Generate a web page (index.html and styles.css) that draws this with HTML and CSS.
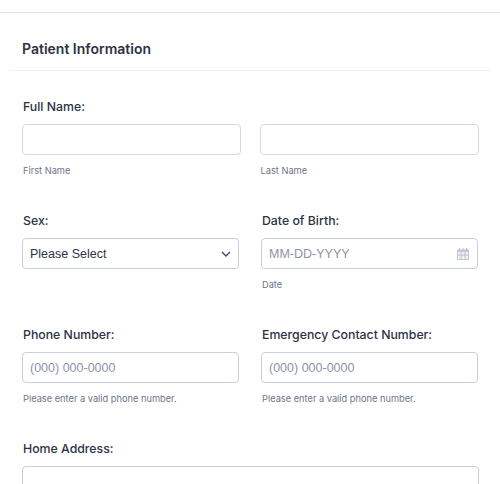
FILE: index.html
```html
<!DOCTYPE html>
<html lang="en">
<head>
    <meta charset="UTF-8">
    <title>Patient Information</title>
    <link rel="stylesheet" href="styles.css">
</head>
<body>
    <div class="form">
        <div class="form-header">
            <h2>Patient Information</h2>
        </div>

        <div class="field field-name">
            <label class="field-label">Full Name:</label>
            <div class="row row-wide">
                <div>
                    <input type="text" class="input">
                    <span class="hint">First Name</span>
                </div>
                <div>
                    <input type="text" class="input">
                    <span class="hint">Last Name</span>
                </div>
            </div>
        </div>

        <div class="row row-narrow">
            <div class="field field-tall">
                <label class="field-label">Sex:</label>
                <div class="select">
                    <span>Please Select</span>
                    <svg width="10" height="6" viewBox="0 0 10 6"><path d="M1 1l4 4 4-4" fill="none" stroke="#3f4a63" stroke-width="1.4"/></svg>
                </div>
            </div>
            <div class="field field-tall">
                <label class="field-label">Date of Birth:</label>
                <div class="date">
                    <input type="text" class="input" placeholder="MM-DD-YYYY">
                    <svg class="date-icon" width="12" height="12" viewBox="0 0 12 12">
                        <path d="M0 1.5h12V12H0z" fill="#c3c8d4"/>
                        <path d="M2.5 0v2M6 0v2M9.500 0v2" stroke="#b4bac8" stroke-width="1"/>
                        <path d="M1 4h2.500v2.500H1zM4.700 4h2.600v2.500H4.700zM8.500 4H11v2.500H8.500zM1 7.700h2.500V11H1zM4.700 7.700h2.600V11H4.700zM8.500 7.700H11V11H8.500z" fill="#eff1f5"/>
                    </svg>
                </div>
                <span class="hint">Date</span>
            </div>
        </div>

        <div class="row row-narrow">
            <div class="field field-tall">
                <label class="field-label">Phone Number:</label>
                <input type="text" class="input" placeholder="(000) 000-0000">
                <span class="hint">Please enter a valid phone number.</span>
            </div>
            <div class="field field-tall">
                <label class="field-label">Emergency Contact Number:</label>
                <input type="text" class="input" placeholder="(000) 000-0000">
                <span class="hint">Please enter a valid phone number.</span>
            </div>
        </div>

        <div class="field">
            <label class="field-label">Home Address:</label>
            <input type="text" class="input">
        </div>
    </div>
</body>
</html>
```

FILE: styles.css
```css
*{box-sizing:border-box;margin:0;padding:0}
html,body{height:100%;overflow:hidden}
body{font-family:Inter,"Liberation Sans",sans-serif;background:#fff;color:#2c3345}
.form{margin-top:12px;border-top:1px solid #dfe1ea;padding:0 21.500px 0 22px}
.form-header{margin:0 -11px 0 -12px;padding:26px 12px 12px;border-bottom:1px solid #f1f2f6}
.form-header h2{font-size:14px;line-height:19px;font-weight:600;color:#2c3345}
.field-label{display:block;padding:1px 0 0 1px;font-size:12.300px;line-height:18px;font-weight:500;color:#2c3345;margin-bottom:8px}
.field-name{margin-top:26px;height:114px}
.field-tall{height:114px}
.row{display:grid}
.row-wide{grid-template-columns:218.500px 219px;column-gap:19px}
.row-narrow{grid-template-columns:217px 217px;column-gap:22px}
.input{display:block;width:100%;height:31px;border:1px solid #c9cedd;border-radius:4px;background:#fff;padding:0 7px;font-family:"Liberation Sans",Arial,sans-serif;font-size:12.500px;color:#2c3345;outline:none}
.row-wide .input{border-color:#d6d7e2}
.input::placeholder{color:#8d93a6;opacity:1}
.hint{display:block;padding-left:1px;margin-top:9px;font-size:9.250px;line-height:13px;color:#6c7489}
.select{display:flex;align-items:center;justify-content:space-between;height:31px;border:1px solid #c9cedd;border-radius:4px;padding:0 7px;font-family:"Liberation Sans",Arial,sans-serif;font-size:12.500px;color:#2c3345}
.date{position:relative}
.date-icon{position:absolute;right:9.500px;top:10px}
```
